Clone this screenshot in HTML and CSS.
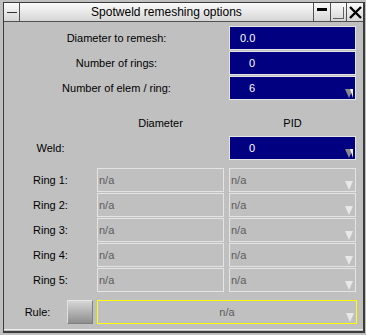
FILE: index.html
```html
<!DOCTYPE html>
<html lang="en">
<head>
  <meta charset="UTF-8">
  <title>Spotweld remeshing options</title>
  <link rel="stylesheet" href="styles.css">
</head>
<body>

  <div class="window">

    <!-- Title bar -->
    <div class="titlebar">
      <div class="tb-btn menu"><span class="dash"></span></div>
      <div class="title">Spotweld remeshing options</div>
      <div class="tb-btn min"><span class="bar"></span></div>
      <div class="tb-btn max"><span class="box"></span></div>
      <div class="tb-btn close">
        <svg width="13" height="13" viewBox="0 0 13 13">
          <path d="M1 1 L12 12 M12 1 L1 12" stroke="#000" stroke-width="2.4" fill="none"/>
        </svg>
      </div>
    </div>

    <div class="panel">

      <!-- Remesh options -->
      <div class="options">
        <div class="label">Diameter to remesh:</div>
        <div class="field navy pad-a">0.0</div>
        <div class="label">Number of rings:</div>
        <div class="field navy pad-b">0</div>
        <div class="label">Number of elem / ring:</div>
        <div class="field navy pad-b">6<span class="arrow dark"></span></div>
      </div>

      <!-- Weld and rings -->
      <div class="rings">
        <div></div>
        <div class="head">Diameter</div>
        <div class="head">PID</div>

        <div class="label">Weld:</div>
        <div></div>
        <div class="field navy pad-b">0<span class="arrow dark"></span></div>

        <div class="label ring-gap">Ring 1:</div>
        <div class="field off ring-gap">n/a</div>
        <div class="field off ring-gap">n/a<span class="arrow light"></span></div>

        <div class="label">Ring 2:</div>
        <div class="field off">n/a</div>
        <div class="field off">n/a<span class="arrow light"></span></div>

        <div class="label">Ring 3:</div>
        <div class="field off">n/a</div>
        <div class="field off">n/a<span class="arrow light"></span></div>

        <div class="label">Ring 4:</div>
        <div class="field off">n/a</div>
        <div class="field off">n/a<span class="arrow light"></span></div>

        <div class="label">Ring 5:</div>
        <div class="field off">n/a</div>
        <div class="field off">n/a<span class="arrow light"></span></div>
      </div>

      <!-- Rule -->
      <div class="rule">
        <div class="label">Rule:</div>
        <div class="rule-btn"></div>
        <div class="field rule-field">n/a<span class="arrow light"></span></div>
      </div>

    </div>
  </div>

</body>
</html>
```

FILE: styles.css
```css
/* General styling */
body {
  margin: 0;
  padding: 0;
  background-color: #c0c0c0;
  font-family: 'Liberation Sans', Arial, sans-serif;
  font-size: 12px;
  color: #000;
}

.window {
  margin: 2px 0 0 3px;
  width: 359px;
  height: 328px;
  border: 1px solid #3c3c3c;
  border-right: 2px solid #3c3c3c;
  border-bottom: 2px solid #3c3c3c;
  background-color: #c0c0c0;
}

/* Title bar */
.titlebar {
  display: flex;
  height: 18px;
  border-bottom: 1px solid #505050;
  background: linear-gradient(#fbfbfb, #d6d6d6);
}

.tb-btn {
  display: flex;
  align-items: center;
  justify-content: center;
  box-sizing: border-box;
  height: 18px;
  border-right: 1px solid #505050;
}

.menu {
  width: 16px;
}

.menu .dash {
  width: 10px;
  height: 1px;
  background-color: #303030;
}

.title {
  flex: 1;
  text-align: center;
  line-height: 19px;
  border-right: 1px solid #505050;
}

.min {
  width: 17px;
  align-items: flex-start;
}

.min .bar {
  margin-top: 5px;
  width: 10px;
  height: 3px;
  background-color: #000;
}

.max {
  width: 16px;
}

.max .box {
  width: 10px;
  height: 11px;
  border-right: 1px solid #606060;
  border-bottom: 1px solid #606060;
  margin-top: 1px;
}

.close {
  flex: 0 0 16px;
  border-right: none;
}

/* Panel */
.panel {
  height: 308px;
  box-sizing: border-box;
  padding-top: 4px;
  border-bottom: 1px solid #eeeeee;
  font-size: 11px;
}

.label {
  display: flex;
  align-items: center;
  justify-content: center;
}

.field {
  position: relative;
  box-sizing: border-box;
  height: 24px;
  line-height: 22px;
  border: 1px solid #e4e4e4;
  white-space: nowrap;
}

.navy {
  background-color: #000080;
  color: #fff;
}

.pad-a {
  padding-left: 10px;
}

.pad-b {
  padding-left: 19px;
}

.off {
  color: #5c5c5c;
  padding-left: 1px;
}

/* Drop-down arrows */
.arrow {
  position: absolute;
  right: 2px;
  bottom: 1px;
  width: 0;
  height: 0;
  border-left: 4px solid transparent;
  border-right: 4px solid transparent;
  border-top: 9px solid #e8e8e8;
}

.arrow.dark {
  border-top-color: #8a8a8a;
}

.arrow.dark::after {
  content: '';
  position: absolute;
  left: 1px;
  top: -9px;
  width: 0;
  height: 0;
  border-left: 3px solid transparent;
  border-top: 9px solid #f0f0f0;
}

/* Options section */
.options {
  display: grid;
  grid-template-columns: 225px 127px;
  row-gap: 1px;
}

/* Rings section */
.rings {
  display: grid;
  grid-template-columns: 88px 127px 127px;
  column-gap: 5px;
  row-gap: 1px;
  margin-top: 11px;
}

.rings .label {
  height: 24px;
  padding-left: 5px;
}

.head {
  display: flex;
  align-items: center;
  justify-content: center;
  height: 24px;
}

.ring-gap {
  margin-top: 7px;
}

/* Rule section */
.rule {
  display: grid;
  grid-template-columns: 59px 26px 260px;
  column-gap: 4px;
  margin-top: 8px;
}

.rule .label {
  padding-left: 8px;
}

.rule-btn {
  box-sizing: border-box;
  height: 24px;
  border: 1px solid #808080;
  border-top-color: #e8e8e8;
  border-left-color: #e0e0e0;
  background: linear-gradient(#d6d6d6, #8e8e8e);
}

.rule-field {
  border-color: #ffff00;
  color: #5c5c5c;
  text-align: center;
}
```
